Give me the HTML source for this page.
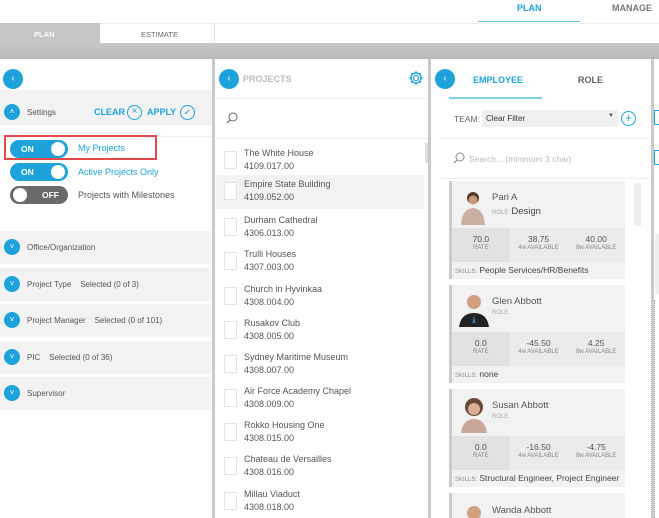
<!DOCTYPE html>
<html style="width:659px;height:518px;overflow:hidden"><head><meta charset="utf-8"><style>
*{box-sizing:border-box;margin:0;padding:0}
body{width:659px;height:518px;overflow:hidden;background:#fff;font-family:"Liberation Sans",sans-serif;color:#444;position:relative}
.a{position:absolute}
.blue{color:#1ea2dc}
.circ{position:absolute;width:18px;height:18px;border-radius:50%;background:#1ea2dc;color:#fff;font-size:10px;text-align:center;line-height:17px}
.sec{position:absolute;left:0;width:211px;height:33px;background:#f2f2f2}
.sec .circ{left:4px;top:8px;width:16px;height:16px;font-size:8px;line-height:15px}
.sec span{position:absolute;left:27px;top:12px;font-size:8px;color:#555;white-space:nowrap}
.tog{position:absolute;left:10px;width:58px;height:18px;border-radius:9px;font-size:8.5px;font-weight:bold;color:#fff}
.tog .k{position:absolute;top:2px;width:14px;height:14px;border-radius:50%;background:#fff}
.pi{position:absolute;left:216px;width:212px;height:34px;font-size:9px;color:#555}
.pi .b{position:absolute;left:8px;top:7px;width:13px;height:18px;border:1px solid #e3e3e3;background:#fff}
.pi .n{position:absolute;left:28px;top:4px}
.pi .c{position:absolute;left:28px;top:17px}
.card{position:absolute;left:449px;width:176px;height:98px;background:#f2f2f2;border-left:3px solid #ccc}
.card .nm{position:absolute;left:40px;top:11px;font-size:9.5px;color:#555}
.card .rl{position:absolute;left:40px;top:25px;font-size:6px;color:#aaa}
.card .rl b{font-weight:normal;font-size:9.5px;color:#444;margin-left:3px}
.card .av{position:absolute;left:6px;top:6px;width:32px;height:38px}
.card .st{position:absolute;left:0;top:47px;width:173px;height:34px;background:#ebebeb;display:flex}
.card .st div{flex:1;text-align:center;font-size:8.5px;color:#555;padding-top:7px;line-height:9px}
.card .st div:first-child{background:#e2e2e2}
.card .st small{display:block;font-size:6px;color:#888}
.card .sk{position:absolute;left:3px;top:84px;font-size:8.5px;color:#444;white-space:nowrap}
.card .sk small{font-size:6px;color:#888}
</style></head><body>
<div class="a blue" style="left:517px;top:3px;font-size:9px;font-weight:bold">PLAN</div>
<div class="a" style="left:478px;top:21px;width:102px;height:1px;background:#5bc3ea"></div>
<div class="a" style="left:612px;top:3px;font-size:9px;font-weight:bold;color:#777">MANAGE</div>
<div class="a" style="left:0;top:23px;width:659px;height:1px;background:#eee"></div>
<div class="a" style="left:0;top:23px;width:100px;height:21px;background:#c6c6c6"></div>
<div class="a" style="left:34px;top:30px;font-size:7.5px;font-weight:bold;color:#fff">PLAN</div>
<div class="a" style="left:141px;top:30px;font-size:7.5px;color:#666">ESTIMATE</div>
<div class="a" style="left:214px;top:23px;width:1px;height:21px;background:#e5e5e5"></div>
<div class="a" style="left:0;top:43px;width:659px;height:16px;background:linear-gradient(#c8c8c8,#b9b9b9)"></div>
<div class="a" style="left:212px;top:59px;width:3px;height:459px;background:#c9c9c9"></div>
<div class="a" style="left:428px;top:59px;width:3px;height:459px;background:#c9c9c9"></div>
<div class="a" style="left:651px;top:59px;width:3px;height:459px;background:#c9c9c9"></div>
<div class="circ" style="left:3px;top:69px;width:20px;height:20px;line-height:19px">‹</div>
<div class="a" style="left:0;top:90px;width:212px;height:35px;background:#f2f2f2"></div>
<div class="circ" style="left:4px;top:104px;width:16px;height:16px;font-size:8px;line-height:16px">˄</div>
<div class="a" style="left:27px;top:108px;font-size:8px;color:#555">Settings</div>
<div class="a blue" style="left:94px;top:107px;font-size:9px;font-weight:bold">CLEAR</div>
<div class="a" style="left:127px;top:105px;width:15px;height:15px;border:1.5px solid #1ea2dc;border-radius:50%;color:#1ea2dc;font-size:10px;text-align:center;line-height:12px">×</div>
<div class="a blue" style="left:147px;top:107px;font-size:9px;font-weight:bold">APPLY</div>
<div class="a" style="left:180px;top:105px;width:15px;height:15px;border:1.5px solid #1ea2dc;border-radius:50%;color:#1ea2dc;font-size:9px;text-align:center;line-height:12px">✓</div>
<div class="a" style="left:0;top:136px;width:212px;height:1px;background:#eee"></div>
<div class="a" style="left:4px;top:135px;width:153px;height:25px;border:2px solid #e54848"></div>
<div class="tog" style="top:140px;background:#1ea2dc"><span class="a" style="left:11px;top:4px">ON</span><div class="k" style="left:41px"></div></div>
<div class="a blue" style="left:78px;top:143px;font-size:9px">My Projects</div>
<div class="tog" style="top:163px;background:#1ea2dc"><span class="a" style="left:11px;top:4px">ON</span><div class="k" style="left:41px"></div></div>
<div class="a blue" style="left:78px;top:167px;font-size:9px">Active Projects Only</div>
<div class="tog" style="top:186px;background:#6a6a6a"><div class="k" style="left:3px"></div><span class="a" style="left:32px;top:4px">OFF</span></div>
<div class="a" style="left:78px;top:190px;font-size:9px;color:#555">Projects with Milestones</div>
<div class="sec" style="top:231px"><div class="circ">˅</div><span>Office/Organization</span></div>
<div class="sec" style="top:268px"><div class="circ">˅</div><span>Project Type &nbsp;&nbsp; Selected (0 of 3)</span></div>
<div class="sec" style="top:304px"><div class="circ">˅</div><span>Project Manager &nbsp;&nbsp; Selected (0 of 101)</span></div>
<div class="sec" style="top:341px"><div class="circ">˅</div><span>PIC &nbsp;&nbsp; Selected (0 of 36)</span></div>
<div class="sec" style="top:377px"><div class="circ">˅</div><span>Supervisor</span></div>
<div class="circ" style="left:219px;top:69px;width:20px;height:20px;line-height:19px">‹</div>
<div class="a" style="left:243px;top:74px;font-size:9px;font-weight:bold;color:#bbb">PROJECTS</div>
<svg class="a" style="left:408px;top:70px" width="16" height="16" viewBox="0 0 16 16"><circle cx="8" cy="8" r="2.6" fill="none" stroke="#1ea2dc" stroke-width="1.3"/><path d="M8 1.5v2M8 12.5v2M1.5 8h2M12.5 8h2M3.4 3.4l1.4 1.4M11.2 11.2l1.4 1.4M3.4 12.6l1.4-1.4M11.2 4.8l1.4-1.4" stroke="#1ea2dc" stroke-width="2"/><circle cx="8" cy="8" r="5" fill="none" stroke="#1ea2dc" stroke-width="1.3"/></svg>
<div class="a" style="left:216px;top:98px;width:212px;height:1px;background:#eee"></div>
<svg class="a" style="left:226px;top:112px" width="12" height="12"><circle cx="7" cy="5" r="4" fill="none" stroke="#666" stroke-width="1"/><path d="M4 8L1 11" stroke="#666" stroke-width="1.2"/></svg>
<div class="a" style="left:216px;top:138px;width:212px;height:1px;background:#eee"></div>
<div class="pi" style="top:144px"><div class="b"></div><div class="n">The White House</div><div class="c">4109.017.00</div></div>
<div class="pi" style="top:175px;background:#f2f2f2;width:208px"><div class="b"></div><div class="n">Empire State Building</div><div class="c">4109.052.00</div></div>
<div class="pi" style="top:211px"><div class="b"></div><div class="n">Durham Cathedral</div><div class="c">4306.013.00</div></div>
<div class="pi" style="top:245px"><div class="b"></div><div class="n">Trulli Houses</div><div class="c">4307.003.00</div></div>
<div class="pi" style="top:280px"><div class="b"></div><div class="n">Church in Hyvinkaa</div><div class="c">4308.004.00</div></div>
<div class="pi" style="top:314px"><div class="b"></div><div class="n">Rusakov Club</div><div class="c">4308.005.00</div></div>
<div class="pi" style="top:348px"><div class="b"></div><div class="n">Sydney Maritime Museum</div><div class="c">4308.007.00</div></div>
<div class="pi" style="top:382px"><div class="b"></div><div class="n">Air Force Academy Chapel</div><div class="c">4308.009.00</div></div>
<div class="pi" style="top:416px"><div class="b"></div><div class="n">Rokko Housing One</div><div class="c">4308.015.00</div></div>
<div class="pi" style="top:450px"><div class="b"></div><div class="n">Chateau de Versailles</div><div class="c">4308.016.00</div></div>
<div class="pi" style="top:485px"><div class="b"></div><div class="n">Millau Viaduct</div><div class="c">4308.018.00</div></div>
<div class="a" style="left:425px;top:143px;width:3px;height:20px;background:#ddd"></div>
<div class="circ" style="left:435px;top:69px;width:20px;height:20px;line-height:19px">‹</div>
<div class="a blue" style="left:473px;top:75px;font-size:9px;font-weight:bold">EMPLOYEE</div>
<div class="a" style="left:578px;top:75px;font-size:9px;font-weight:bold;color:#666">ROLE</div>
<div class="a" style="left:449px;top:97px;width:93px;height:2px;background:#7fd0ee"></div>
<div class="a" style="left:454px;top:114px;font-size:8.5px;color:#666">TEAM:</div>
<div class="a" style="left:482px;top:110px;width:136px;height:17px;background:#f0f0f0;font-size:8px;color:#333;padding:4px 0 0 4px">Clear Filter<span class="a" style="right:4px;top:3px;font-size:6px;color:#555">▼</span></div>
<div class="a" style="left:621px;top:111px;width:15px;height:15px;border:1.5px solid #1ea2dc;border-radius:50%;color:#1ea2dc;font-size:12px;text-align:center;line-height:12px">+</div>
<div class="a" style="left:440px;top:138px;width:211px;height:1px;background:#eee"></div>
<svg class="a" style="left:453px;top:152px" width="12" height="12"><circle cx="7" cy="5" r="4" fill="none" stroke="#888" stroke-width="1"/><path d="M4 8L1 11" stroke="#888" stroke-width="1.2"/></svg>
<div class="a" style="left:469px;top:154px;font-size:8.5px;color:#bbb">Search... (minimum 3 char)</div>
<div class="a" style="left:440px;top:178px;width:211px;height:1px;background:#eee"></div>
<div class="a" style="left:634px;top:183px;width:7px;height:43px;background:#eee"></div>
<div class="card" style="top:181px"><svg class="av" viewBox="0 0 32 38"><circle cx="15" cy="11" r="6" fill="#5a3a2a"/><circle cx="15" cy="13" r="4.5" fill="#c89a7a"/><path d="M3 38q1-16 12-17q11 1 12 17z" fill="#c9b0a0"/></svg><div class="nm">Pari A</div><div class="rl">ROLE<b>Design</b></div><div class="st"><div>70.0<small>RATE</small></div><div>38.75<small>4w AVAILABLE</small></div><div>40.00<small>8w AVAILABLE</small></div></div><div class="sk"><small>SKILLS:</small> People Services/HR/Benefits</div></div>
<div class="card" style="top:285px"><svg class="av" viewBox="0 0 32 38"><circle cx="16" cy="11" r="7" fill="#d0a080"/><path d="M1 36q2-14 15-14q13 0 15 14z" fill="#222"/><path d="M16 24l-1.5 8h3z" fill="#3a7ac0"/></svg><div class="nm">Glen Abbott</div><div class="rl">ROLE</div><div class="st"><div>0.0<small>RATE</small></div><div>-45.50<small>4w AVAILABLE</small></div><div>4.25<small>8w AVAILABLE</small></div></div><div class="sk"><small>SKILLS:</small> none</div></div>
<div class="card" style="top:389px"><svg class="av" viewBox="0 0 32 38"><circle cx="16" cy="12" r="9" fill="#6a4a35"/><circle cx="16" cy="14" r="6" fill="#dab098"/><path d="M3 38q2-14 13-14q11 0 13 14z" fill="#c8a898"/></svg><div class="nm">Susan Abbott</div><div class="rl">ROLE</div><div class="st"><div>0.0<small>RATE</small></div><div>-16.50<small>4w AVAILABLE</small></div><div>-4.75<small>8w AVAILABLE</small></div></div><div class="sk"><small>SKILLS:</small> Structural Engineer, Project Engineer</div></div>
<div class="card" style="top:493px;height:25px"><svg class="av" viewBox="0 0 32 38"><circle cx="16" cy="14" r="7" fill="#d0a080"/></svg><div class="nm" style="top:12px">Wanda Abbott</div></div>
<div class="a" style="left:654px;top:110px;width:5px;height:15px;border:1.5px solid #1ea2dc;border-right:none"></div>
<div class="a" style="left:654px;top:150px;width:5px;height:15px;border:1.5px solid #1ea2dc;border-right:none"></div>
<div class="a" style="left:655px;top:234px;width:4px;height:60px;background:#eee"></div>
<div class="a" style="left:654px;top:300px;width:5px;height:218px;border-left:1px dotted #999"></div>
</body></html>
